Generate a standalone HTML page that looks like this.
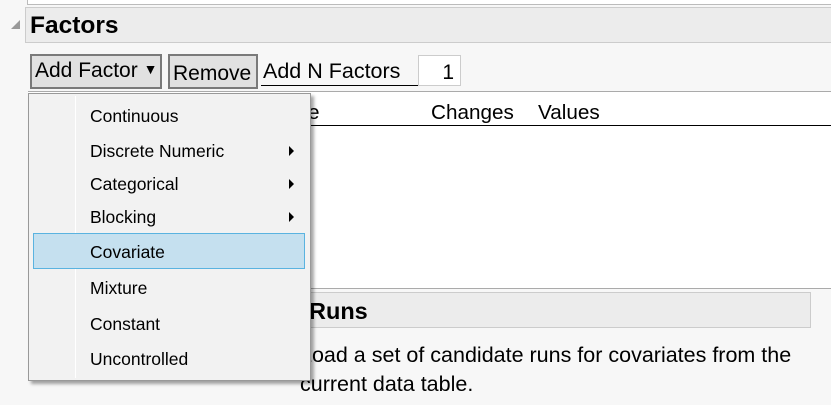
<!DOCTYPE html>
<html><head><meta charset="utf-8"><style>
body{margin:0;width:831px;height:405px;background:#f7f7f7;font-family:"Liberation Sans",sans-serif;position:relative;overflow:hidden;color:#000}
.a{position:absolute}
.btn{background:#e1e1e1;border:2px solid #7a7a7a;box-sizing:border-box;font-size:21px;line-height:30px;padding-left:3px}
.mi{position:absolute;left:61px;font-size:17.5px}
.arr{position:absolute;left:260px;width:0;height:0;border-top:5px solid transparent;border-bottom:5px solid transparent;border-left:5px solid #000}
</style></head><body>
<div class="a" style="left:27px;top:-2px;width:810px;height:5px;border:1px solid #bbb;background:#fff"></div>
<div class="a" style="left:11px;top:20px;width:0;height:0;border-left:9px solid transparent;border-bottom:9px solid #999"></div>
<div class="a" style="left:25px;top:7px;width:810px;height:36px;background:#ececec;border:1px solid #ccc;box-sizing:border-box"></div>
<div class="a" style="left:30px;top:10px;font-size:24.5px;font-weight:bold;line-height:32px">Factors</div>
<div class="a btn" style="left:30px;top:54px;width:132px;height:35px">Add Factor <span style="font-size:14px;position:relative;top:-3px">▼</span></div>
<div class="a btn" style="left:168px;top:54px;width:90px;height:35px;padding-top:3px">Remove</div>
<div class="a" style="left:263px;top:57px;font-size:21.5px;line-height:28px">Add N Factors</div>
<div class="a" style="left:261px;top:85px;width:157px;height:1px;background:#000"></div>
<div class="a" style="left:418px;top:55px;width:43px;height:31px;background:#fff;border:1px solid #ccc;box-sizing:border-box;text-align:right;font-size:21px;line-height:33px;padding-right:6px">1</div>
<div class="a" style="left:28px;top:91px;width:803px;height:196px;background:#fff;border-top:1px solid #aaa;border-bottom:1px solid #aaa"></div>
<div class="a" style="left:308px;top:101px;font-size:20.7px">e</div>
<div class="a" style="left:431px;top:101px;font-size:20.7px">Changes</div>
<div class="a" style="left:538px;top:101px;font-size:20.7px">Values</div>
<div class="a" style="left:300px;top:125px;width:531px;height:1px;background:#000"></div>
<div class="a" style="left:295px;top:292px;width:516px;height:36px;background:#ececec;border:1px solid #ccc;box-sizing:border-box"></div>
<div class="a" style="left:309px;top:297px;font-size:23.5px;font-weight:bold;line-height:29px">Runs</div>
<div class="a" style="left:300px;top:341px;font-size:21.5px;line-height:29px">Load a set of candidate runs for covariates from the<br>current data table.</div>
<div class="a" style="left:28px;top:93px;width:283px;height:288px;background:#f2f2f2;border:1px solid #999;box-sizing:border-box;box-shadow:3px 3px 3px rgba(0,0,0,.35)">
<div class="a" style="left:46px;top:2px;width:1px;height:282px;background:#fff"></div>
<div class="mi" style="top:12px">Continuous</div>
<div class="mi" style="top:47px">Discrete Numeric</div><div class="arr" style="top:52px"></div>
<div class="mi" style="top:80px">Categorical</div><div class="arr" style="top:85px"></div>
<div class="mi" style="top:113px">Blocking</div><div class="arr" style="top:118px"></div>
<div class="a" style="left:4px;top:139px;width:272px;height:36px;background:#c5e0ef;border:1px solid #5ab3e0;box-sizing:border-box"></div>
<div class="mi" style="top:148px">Covariate</div>
<div class="mi" style="top:184px">Mixture</div>
<div class="mi" style="top:220px">Constant</div>
<div class="mi" style="top:255px">Uncontrolled</div>
</div>
</body></html>
